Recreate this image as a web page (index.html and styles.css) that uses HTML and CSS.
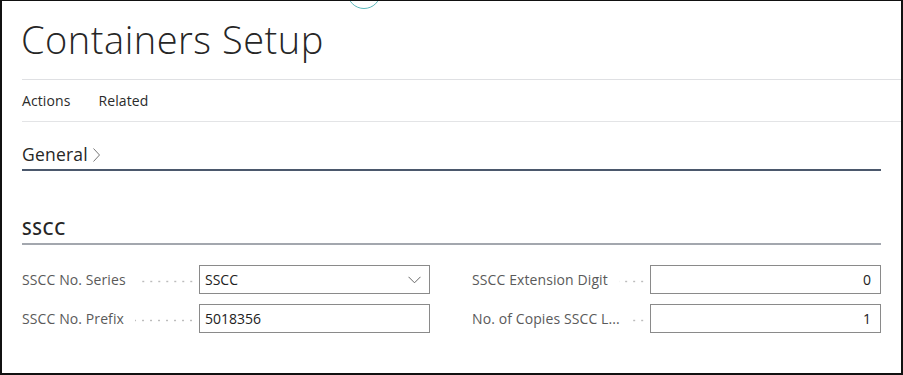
FILE: index.html
```html
<!DOCTYPE html>
<html>
<head>
<meta charset="utf-8">
<link rel="stylesheet" href="styles.css">
</head>
<body>
<div class="frame">
  <div class="orb"></div>
  <header class="head">
    <h1 class="title">Containers Setup</h1>
  </header>
  <nav class="menu">
    <span class="menu-item">Actions</span>
    <span class="menu-item">Related</span>
  </nav>
  <section class="group">
    <div class="group-head collapsed">
      <span class="group-title">General</span>
      <svg class="chev" width="9" height="16" viewBox="0 0 9 16"><path d="M1.5 1.5 L7.5 8 L1.5 14.5" fill="none" stroke="#666" stroke-width="0.9"/></svg>
    </div>
  </section>
  <section class="group">
    <div class="group-head open">
      <span class="group-title bold">SSCC</span>
    </div>
    <div class="fields">
      <div class="col">
        <div class="field">
          <span class="label">SSCC No. Series</span><span class="leader"></span>
          <div class="input select"><span>SSCC</span>
            <svg class="drop" width="13" height="8" viewBox="0 0 13 8"><path d="M0.5 0.8 L6.5 6.8 L12.5 0.8" fill="none" stroke="#666" stroke-width="1"/></svg>
          </div>
        </div>
        <div class="field">
          <span class="label">SSCC No. Prefix</span><span class="leader"></span>
          <div class="input"><span>5018356</span></div>
        </div>
      </div>
      <div class="col">
        <div class="field">
          <span class="label">SSCC Extension Digit</span><span class="leader"></span>
          <div class="input num"><span>0</span></div>
        </div>
        <div class="field">
          <span class="label">No. of Copies SSCC L...</span><span class="leader"></span>
          <div class="input num"><span>1</span></div>
        </div>
      </div>
    </div>
  </section>
</div>
</body>
</html>
```

FILE: styles.css
```css
* { box-sizing: border-box; }
html, body { margin: 0; padding: 0; background: #fff; }
body {
  font-family: "Open Sans", "Noto Sans", sans-serif;
  color: #212121;
}
.frame {
  position: relative;
  width: 903px;
  height: 375px;
  border: 2px solid #111;
  border-top-width: 1px;
  overflow: hidden;
  padding-left: 20px;
}
.orb {
  position: absolute;
  left: 345px;
  top: -26px;
  width: 34px;
  height: 34px;
  border: 1.5px solid #5bb8bb;
  border-radius: 50%;
}
.head {
  height: 79px;
  border-bottom: 1px solid #dfe0e3;
  display: flex;
  align-items: flex-start;
}
.title {
  margin: 13px 0 0 -1px;
  font-weight: 300;
  font-size: 38px;
  letter-spacing: 0.5px;
  line-height: 50px;
  color: #262626;
}
.menu {
  height: 42px;
  border-bottom: 1px solid #e3e4e6;
  display: flex;
  align-items: center;
  gap: 28px;
}
.menu-item {
  font-size: 14px;
  letter-spacing: 0.1px;
  color: #2b2b2b;
}
.group { margin-right: 20px; }
.group-head {
  display: flex;
  align-items: center;
}
.group-head.collapsed {
  height: 49px;
  padding-top: 17px;
  border-bottom: 2px solid #4b586c;
  gap: 4px;
}
.group-head.open {
  margin-top: 34px;
  height: 40px;
  padding-top: 8px;
  border-bottom: 2px solid #a3a7ae;
}
.group-title {
  font-size: 17.5px;
  color: #262626;
  letter-spacing: 0.2px;
}
.group-title.bold { font-weight: 600; font-size: 17.5px; letter-spacing: 0.6px; }
.chev { margin-top: 2px; }
.fields {
  display: grid;
  grid-template-columns: 408px 409px;
  column-gap: 42px;
  margin-top: 20px;
}
.col {
  display: flex;
  flex-direction: column;
  gap: 10px;
}
.field {
  display: flex;
  align-items: center;
  height: 29px;
}
.label {
  font-size: 14px;
  color: #5a5a5a;
  letter-spacing: 0.1px;
  white-space: nowrap;
}
.leader {
  flex: 1;
  height: 3px;
  margin: 4px 4px 0 11px;
  background-image: radial-gradient(circle, #bcbcbc 0.8px, transparent 1.2px);
  background-size: 8px 3px;
  background-position: right center;
  background-repeat: repeat-x;
}
.input {
  width: 231px;
  flex: none;
  height: 29px;
  border: 1px solid #8a8a8a;
  display: flex;
  align-items: center;
  padding: 0 8px 0 5px;
  font-size: 14px;
  color: #212121;
}
.input.select { justify-content: space-between; padding-right: 8px; }
.input.num { justify-content: flex-end; padding-right: 9px; }
.drop { margin-top: 1px; }
```
